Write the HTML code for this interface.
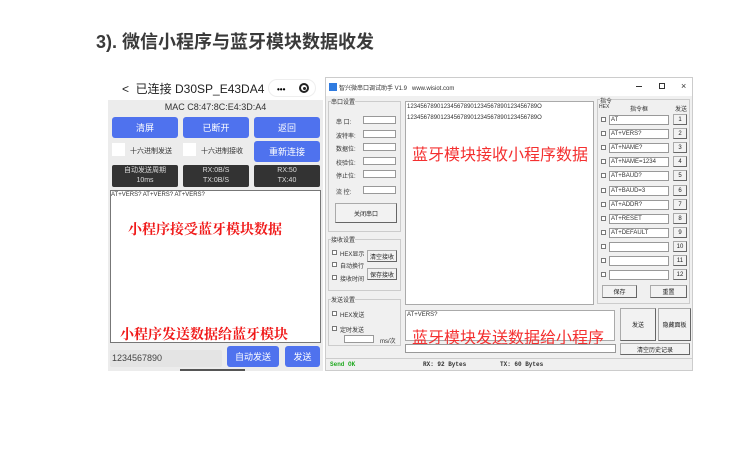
<!DOCTYPE html>
<html><head><meta charset="utf-8">
<style>
*{margin:0;padding:0;box-sizing:border-box}
body{width:751px;height:452px;background:#fff;position:relative;overflow:hidden;font-family:"Liberation Sans","Noto Sans CJK SC",sans-serif}
.a{position:absolute}
.h{left:96px;top:28px;font-size:18px;font-weight:bold;color:#3a3a3a;white-space:nowrap}
.bb{background:#4f72ee;color:#fff;font-size:9px;text-align:center;border-radius:3px;display:flex;align-items:center;justify-content:center}
.dk{background:#333;color:#ddd;font-size:7px;text-align:center;line-height:10px;padding-top:1px;border-radius:2px}
.red{color:#f01818;font-family:"Noto Serif CJK SC",serif;font-weight:bold;white-space:nowrap}
.red2{color:#f43030;white-space:nowrap}
.t{font-size:6px;color:#333;white-space:nowrap}
.in{background:#fff;border:1px solid #999;height:8px}
.gb{border:1px solid #ccc}
.btn{background:#f2f2f2;border:1px solid #aaa;border-right-color:#666;border-bottom-color:#666;font-size:6px;text-align:center;display:flex;align-items:center;justify-content:center;color:#222}
.cb{width:5px;height:5px;border:1px solid #777;background:#fff}
</style></head><body>
<div class="a h">3). 微信小程序与蓝牙模块数据收发</div>

<!-- phone -->
<div class="a" style="left:108px;top:75px;width:215px;height:296px;background:#ececec"></div>
<div class="a" style="left:108px;top:75px;width:215px;height:25px;background:#fff"></div>
<div class="a" style="left:122px;top:80px;font-size:12px;color:#222;white-space:nowrap">&lt;&nbsp;&nbsp;已连接 D30SP_E43DA4</div>
<div class="a" style="left:268px;top:79px;width:48px;height:18px;border:1px solid #eee;border-radius:9px;background:#fff"></div>
<div class="a" style="left:277px;top:85px;font-size:8px;font-weight:bold">•••</div>
<div class="a" style="left:299px;top:83px;width:10px;height:10px;border:2px solid #222;border-radius:50%"></div>
<div class="a" style="left:303px;top:87px;width:3px;height:3px;background:#222;border-radius:50%"></div>
<div class="a" style="left:108px;top:102px;width:215px;text-align:center;font-size:9px;color:#333">MAC C8:47:8C:E4:3D:A4</div>
<div class="a bb" style="left:112px;top:117px;width:66px;height:21px">清屏</div>
<div class="a bb" style="left:183px;top:117px;width:66px;height:21px">已断开</div>
<div class="a bb" style="left:254px;top:117px;width:66px;height:21px">返回</div>
<div class="a" style="left:112px;top:143px;width:13px;height:13px;background:#fff"></div>
<div class="a t" style="left:130px;top:146px;font-size:7px">十六进制发送</div>
<div class="a" style="left:183px;top:143px;width:13px;height:13px;background:#fff"></div>
<div class="a t" style="left:201px;top:146px;font-size:7px">十六进制接收</div>
<div class="a bb" style="left:254px;top:141px;width:66px;height:21px">重新连接</div>
<div class="a dk" style="left:112px;top:165px;width:66px;height:22px">自动发送周期<br>10ms</div>
<div class="a dk" style="left:183px;top:165px;width:66px;height:22px">RX:0B/S<br>TX:0B/S</div>
<div class="a dk" style="left:254px;top:165px;width:66px;height:22px">RX:50<br>TX:40</div>
<div class="a" style="left:110px;top:190px;width:211px;height:153px;background:#fff;border:1px solid #777"></div>
<div class="a t" style="left:111px;top:192px;font-size:6px">AT+VERS? AT+VERS? AT+VERS?</div>
<div class="a red" style="left:128px;top:219px;font-size:14px">小程序接受蓝牙模块数据</div>
<div class="a red" style="left:120px;top:324px;font-size:14px">小程序发送数据给蓝牙模块</div>
<div class="a" style="left:110px;top:350px;width:112px;height:17px;background:#e4e4e4;border-radius:2px"></div>
<div class="a" style="left:112px;top:353px;font-size:9px;color:#444">1234567890</div>
<div class="a bb" style="left:227px;top:346px;width:52px;height:21px">自动发送</div>
<div class="a bb" style="left:285px;top:346px;width:35px;height:21px">发送</div>
<div class="a" style="left:180px;top:369px;width:65px;height:2px;background:#555"></div>

<!-- window -->
<div class="a" style="left:325px;top:77px;width:368px;height:294px;background:#f0f0f0;border:1px solid #ccc"></div>
<div class="a" style="left:326px;top:78px;width:366px;height:18px;background:#fff"></div>
<div class="a" style="left:329px;top:83px;width:8px;height:8px;background:#2f7be0"></div>
<div class="a t" style="left:339px;top:83px;font-size:6px">智兴微串口调试助手 V1.9&nbsp;&nbsp; www.wisiot.com</div>
<div class="a" style="left:636px;top:86px;width:6px;height:1px;background:#333"></div>
<div class="a" style="left:659px;top:83px;width:6px;height:6px;border:1px solid #333"></div>
<div class="a" style="left:681px;top:81px;font-size:9px;color:#333">×</div>

<div class="a gb" style="left:328px;top:101px;width:73px;height:131px"></div>
<div class="a t" style="left:331px;top:97px;background:#f0f0f0">串口设置</div>
<div class="a t" style="left:336px;top:117px">串 口:</div><div class="a in" style="left:363px;top:116px;width:33px"></div>
<div class="a t" style="left:336px;top:131px">波特率:</div><div class="a in" style="left:363px;top:130px;width:33px"></div>
<div class="a t" style="left:336px;top:144px">数据位:</div><div class="a in" style="left:363px;top:143px;width:33px"></div>
<div class="a t" style="left:336px;top:158px">校验位:</div><div class="a in" style="left:363px;top:157px;width:33px"></div>
<div class="a t" style="left:336px;top:171px">停止位:</div><div class="a in" style="left:363px;top:170px;width:33px"></div>
<div class="a t" style="left:336px;top:187px">流 控:</div><div class="a in" style="left:363px;top:186px;width:33px"></div>
<div class="a btn" style="left:335px;top:203px;width:62px;height:20px">关闭串口</div>

<div class="a gb" style="left:328px;top:239px;width:73px;height:52px"></div>
<div class="a t" style="left:331px;top:235px;background:#f0f0f0">接收设置</div>
<div class="a cb" style="left:332px;top:250px"></div><div class="a t" style="left:340px;top:249px">HEX显示</div>
<div class="a cb" style="left:332px;top:262px"></div><div class="a t" style="left:340px;top:261px">自动换行</div>
<div class="a cb" style="left:332px;top:275px"></div><div class="a t" style="left:340px;top:274px">接收时间</div>
<div class="a btn" style="left:367px;top:250px;width:30px;height:12px">清空接收</div>
<div class="a btn" style="left:367px;top:268px;width:30px;height:12px">保存接收</div>

<div class="a gb" style="left:328px;top:299px;width:73px;height:47px"></div>
<div class="a t" style="left:331px;top:295px;background:#f0f0f0">发送设置</div>
<div class="a cb" style="left:332px;top:311px"></div><div class="a t" style="left:340px;top:310px">HEX发送</div>
<div class="a cb" style="left:332px;top:326px"></div><div class="a t" style="left:340px;top:325px">定时发送</div>
<div class="a in" style="left:344px;top:335px;width:30px"></div><div class="a t" style="left:380px;top:336px">ms/次</div>

<div class="a" style="left:405px;top:101px;width:189px;height:204px;background:#fff;border:1px solid #aaa"></div>
<div class="a t" style="left:407px;top:104px">123456789012345678901234567890123456789O</div>
<div class="a t" style="left:407px;top:115px">123456789012345678901234567890123456789O</div>
<div class="a red2" style="left:412px;top:141px;font-size:16px">蓝牙模块接收小程序数据</div>

<div class="a" style="left:405px;top:310px;width:210px;height:31px;background:#fff;border:1px solid #aaa"></div>
<div class="a t" style="left:407px;top:312px">AT+VERS?</div>
<div class="a red2" style="left:412px;top:324px;font-size:16px">蓝牙模块发送数据给小程序</div>
<div class="a in" style="left:405px;top:344px;width:211px;height:9px"></div>

<div class="a gb" style="left:597px;top:99px;width:93px;height:205px"></div>
<div class="a t" style="left:600px;top:96px;background:#f0f0f0">指令</div>
<div class="a t" style="left:599px;top:104px;font-size:5px">HEX</div>
<div class="a t" style="left:630px;top:104px">指令框</div>
<div class="a t" style="left:675px;top:104px">发送</div>
<div class="a btn" style="left:602px;top:285px;width:35px;height:13px">保存</div>
<div class="a btn" style="left:650px;top:285px;width:37px;height:13px">重置</div>

<div class="a btn" style="left:620px;top:308px;width:36px;height:33px">发送</div>
<div class="a btn" style="left:658px;top:308px;width:33px;height:33px">隐藏面板</div>
<div class="a btn" style="left:620px;top:343px;width:70px;height:12px">清空历史记录</div>

<div class="a" style="left:326px;top:358px;width:366px;height:12px;background:#f0f0f0;border-top:1px solid #ccc"></div>
<div class="a" style="left:330px;top:361px;font-size:6px;color:#2a2;font-family:'Liberation Mono',monospace;font-weight:bold">Send OK</div>
<div class="a" style="left:423px;top:361px;font-size:6px;color:#333;font-family:'Liberation Mono',monospace;font-weight:bold">RX: 92 Bytes</div>
<div class="a" style="left:500px;top:361px;font-size:6px;color:#333;font-family:'Liberation Mono',monospace;font-weight:bold">TX: 60 Bytes</div>

<div class="a cb" style="left:601px;top:117px"></div><div class="a in" style="left:609px;top:115px;width:60px;height:10px"></div><div class="a t" style="left:611px;top:117px">AT</div><div class="a btn" style="left:673px;top:114px;width:14px;height:11px">1</div>
<div class="a cb" style="left:601px;top:131px"></div><div class="a in" style="left:609px;top:129px;width:60px;height:10px"></div><div class="a t" style="left:611px;top:131px">AT+VERS?</div><div class="a btn" style="left:673px;top:128px;width:14px;height:11px">2</div>
<div class="a cb" style="left:601px;top:145px"></div><div class="a in" style="left:609px;top:143px;width:60px;height:10px"></div><div class="a t" style="left:611px;top:145px">AT+NAME?</div><div class="a btn" style="left:673px;top:142px;width:14px;height:11px">3</div>
<div class="a cb" style="left:601px;top:159px"></div><div class="a in" style="left:609px;top:157px;width:60px;height:10px"></div><div class="a t" style="left:611px;top:159px">AT+NAME=1234</div><div class="a btn" style="left:673px;top:156px;width:14px;height:11px">4</div>
<div class="a cb" style="left:601px;top:173px"></div><div class="a in" style="left:609px;top:171px;width:60px;height:10px"></div><div class="a t" style="left:611px;top:173px">AT+BAUD?</div><div class="a btn" style="left:673px;top:170px;width:14px;height:11px">5</div>
<div class="a cb" style="left:601px;top:188px"></div><div class="a in" style="left:609px;top:186px;width:60px;height:10px"></div><div class="a t" style="left:611px;top:188px">AT+BAUD=3</div><div class="a btn" style="left:673px;top:185px;width:14px;height:11px">6</div>
<div class="a cb" style="left:601px;top:202px"></div><div class="a in" style="left:609px;top:200px;width:60px;height:10px"></div><div class="a t" style="left:611px;top:202px">AT+ADDR?</div><div class="a btn" style="left:673px;top:199px;width:14px;height:11px">7</div>
<div class="a cb" style="left:601px;top:216px"></div><div class="a in" style="left:609px;top:214px;width:60px;height:10px"></div><div class="a t" style="left:611px;top:216px">AT+RESET</div><div class="a btn" style="left:673px;top:213px;width:14px;height:11px">8</div>
<div class="a cb" style="left:601px;top:230px"></div><div class="a in" style="left:609px;top:228px;width:60px;height:10px"></div><div class="a t" style="left:611px;top:230px">AT+DEFAULT</div><div class="a btn" style="left:673px;top:227px;width:14px;height:11px">9</div>
<div class="a cb" style="left:601px;top:244px"></div><div class="a in" style="left:609px;top:242px;width:60px;height:10px"></div><div class="a btn" style="left:673px;top:241px;width:14px;height:11px">10</div>
<div class="a cb" style="left:601px;top:258px"></div><div class="a in" style="left:609px;top:256px;width:60px;height:10px"></div><div class="a btn" style="left:673px;top:255px;width:14px;height:11px">11</div>
<div class="a cb" style="left:601px;top:272px"></div><div class="a in" style="left:609px;top:270px;width:60px;height:10px"></div><div class="a btn" style="left:673px;top:269px;width:14px;height:11px">12</div>
</body></html>
